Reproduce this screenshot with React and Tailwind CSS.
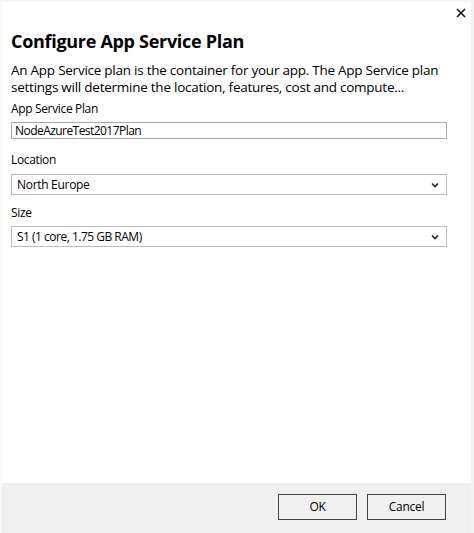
import React from "react";

function Chevron() {
  return (
    <svg width="8" height="6" viewBox="0 0 8 6" className="shrink-0">
      <path d="M1 1.5 L4 4.5 L7 1.5" fill="none" stroke="#222" strokeWidth="1.6" />
    </svg>
  );
}

export default function App() {
  return (
    <div
      className="w-[474px] h-[533px] bg-white flex flex-col text-black border-r-[3px] border-r-[#f3f3f3] border-t-[2px] border-t-[#f7f7f7] border-l-[2px] border-l-[#fafafa]"
      style={{ fontFamily: '"Segoe UI", "Open Sans", "Noto Sans", sans-serif' }}
    >
      <div className="flex-1 relative px-[9px]">
        <svg width="10" height="10" viewBox="0 0 10 10" className="absolute right-[5px] top-[6px]">
          <path d="M1 1 L9 9 M9 1 L1 9" stroke="#111" strokeWidth="1.6" />
        </svg>
        <h1 className="text-[18px] font-bold leading-[24px] mt-[27px] tracking-[-0.3px]">
          Configure App Service Plan
        </h1>
        <p className="text-[13.5px] leading-[17px] mt-[9px] tracking-[-0.25px] w-[442px]">
          An App Service plan is the container for your app. The App Service plan settings will determine the location, features, cost and compute...
        </p>
        <div className="mt-[5px] text-[12px] leading-[16px] tracking-[-0.35px]">App Service Plan</div>
        <div className="mt-[5px] h-[17px] w-[436px] border border-[#a9a9a9] flex items-center pl-[3px] text-[12px] tracking-[-0.55px]">
          NodeAzureTest2017Plan
        </div>
        <div className="mt-[13px] text-[12px] leading-[16px] tracking-[-0.35px]">Location</div>
        <div className="mt-[6px] h-[21px] w-[436px] border border-[#bdbdbd] flex items-center justify-between pl-[5px] pr-[7px] text-[12px] tracking-[-0.3px]">
          <span>North Europe</span>
          <Chevron />
        </div>
        <div className="mt-[10px] text-[12px] leading-[16px] tracking-[-0.35px]">Size</div>
        <div className="mt-[5px] h-[21px] w-[436px] border border-[#bdbdbd] flex items-center justify-between pl-[5px] pr-[7px] text-[12px] tracking-[-0.5px]">
          <span>S1 (1 core, 1.75 GB RAM)</span>
          <Chevron />
        </div>
      </div>
      <div className="h-[50px] bg-[#f0f0f0] flex items-start justify-end gap-[10px] pt-[11px] pr-[25px]">
        <button className="w-[79px] h-[26px] border border-[#444] bg-[#f0f0f0] text-[12px] tracking-[-0.3px] flex items-center justify-center">
          OK
        </button>
        <button className="w-[79px] h-[26px] border border-[#444] bg-[#f0f0f0] text-[12px] tracking-[-0.3px] flex items-center justify-center">
          Cancel
        </button>
      </div>
    </div>
  );
}
